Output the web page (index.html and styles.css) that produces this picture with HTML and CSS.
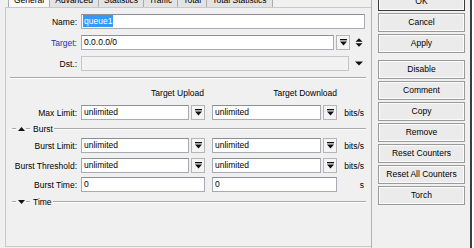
FILE: index.html
```html
<!DOCTYPE html>
<html lang="en">
<head>
    <meta charset="UTF-8">
    <title>Simple Queue</title>
    <link rel="stylesheet" href="styles.css">
</head>
<body>

<div class="window">
    <div class="main">
        <div class="tabs">
            <span class="tab active">General</span>
            <span class="tab">Advanced</span>
            <span class="tab">Statistics</span>
            <span class="tab">Traffic</span>
            <span class="tab">Total</span>
            <span class="tab">Total Statistics</span>
        </div>

        <div class="panel">
            <div class="row">
                <span class="lbl">Name:</span>
                <div class="input w-name"><span class="sel">queue1</span></div>
            </div>
            <div class="row">
                <span class="lbl link">Target:</span>
                <div class="input w-target">0.0.0.0/0</div>
                <span class="drop"><svg width="7" height="7" viewBox="0 0 7 7"><rect x="0" y="0" width="7" height="1.3"/><polygon points="0,2.6 7,2.6 3.5,6.4"/></svg></span>
                <span class="updown"><svg width="8" height="9" viewBox="0 0 8 9"><polygon points="0.5,3.8 4,0.3 7.5,3.8"/><polygon points="0.5,5.2 7.5,5.2 4,8.7"/></svg></span>
            </div>
            <div class="row">
                <span class="lbl">Dst.:</span>
                <div class="input off w-dst"></div>
                <span class="arrow"><svg width="8" height="5" viewBox="0 0 8 5"><polygon points="0,0.5 8,0.5 4,4.5"/></svg></span>
            </div>

            <div class="sep"></div>

            <div class="heads">
                <span class="lbl"></span>
                <span class="head w-col1">Target Upload</span>
                <span class="head w-col2">Target Download</span>
            </div>

            <div class="row mt7">
                <span class="lbl">Max Limit:</span>
                <div class="input w-half1">unlimited</div>
                <span class="drop"><svg width="7" height="7" viewBox="0 0 7 7"><rect x="0" y="0" width="7" height="1.3"/><polygon points="0,2.6 7,2.6 3.5,6.4"/></svg></span>
                <div class="input w-half2 col2">unlimited</div>
                <span class="drop"><svg width="7" height="7" viewBox="0 0 7 7"><rect x="0" y="0" width="7" height="1.3"/><polygon points="0,2.6 7,2.6 3.5,6.4"/></svg></span>
                <span class="unit">bits/s</span>
            </div>

            <div class="section mt4">
                <span class="dash"></span>
                <svg class="tri" width="7" height="4" viewBox="0 0 7 4"><polygon points="0,4 3.5,0 7,4"/></svg>
                <span class="dash"></span>
                <span class="section-name">Burst</span>
                <span class="rule"></span>
            </div>

            <div class="row mt4">
                <span class="lbl">Burst Limit:</span>
                <div class="input w-half1">unlimited</div>
                <span class="drop"><svg width="7" height="7" viewBox="0 0 7 7"><rect x="0" y="0" width="7" height="1.3"/><polygon points="0,2.6 7,2.6 3.5,6.4"/></svg></span>
                <div class="input w-half2 col2">unlimited</div>
                <span class="drop"><svg width="7" height="7" viewBox="0 0 7 7"><rect x="0" y="0" width="7" height="1.3"/><polygon points="0,2.6 7,2.6 3.5,6.4"/></svg></span>
                <span class="unit">bits/s</span>
            </div>
            <div class="row mt5">
                <span class="lbl">Burst Threshold:</span>
                <div class="input w-half1">unlimited</div>
                <span class="drop"><svg width="7" height="7" viewBox="0 0 7 7"><rect x="0" y="0" width="7" height="1.3"/><polygon points="0,2.6 7,2.6 3.5,6.4"/></svg></span>
                <div class="input w-half2 col2">unlimited</div>
                <span class="drop"><svg width="7" height="7" viewBox="0 0 7 7"><rect x="0" y="0" width="7" height="1.3"/><polygon points="0,2.6 7,2.6 3.5,6.4"/></svg></span>
                <span class="unit">bits/s</span>
            </div>
            <div class="row mt4">
                <span class="lbl">Burst Time:</span>
                <div class="input w-col1">0</div>
                <div class="input w-col2 col2">0</div>
                <span class="unit">s</span>
            </div>

            <div class="section mt5">
                <span class="dash"></span>
                <svg class="tri" width="7" height="4" viewBox="0 0 7 4"><polygon points="0,0 7,0 3.5,4"/></svg>
                <span class="dash"></span>
                <span class="section-name">Time</span>
                <span class="rule"></span>
            </div>
        </div>
    </div>

    <div class="side">
        <button class="btn default">OK</button>
        <button class="btn">Cancel</button>
        <button class="btn">Apply</button>
        <button class="btn group">Disable</button>
        <button class="btn">Comment</button>
        <button class="btn">Copy</button>
        <button class="btn">Remove</button>
        <button class="btn">Reset Counters</button>
        <button class="btn">Reset All Counters</button>
        <button class="btn">Torch</button>
    </div>
</div>

</body>
</html>
```

FILE: styles.css
```css
body {
    margin: 0;
    width: 474px;
    height: 248px;
    overflow: hidden;
    background: #ffffff;
    font-family: "Liberation Sans", Arial, sans-serif;
    font-size: 8.5px;
    color: #000;
}

.window {
    display: flex;
    margin-top: -8px;
    height: 256px;
    width: 472px;
    background: #f0f0f0;
}

/* left part: tabs + form */
.main {
    width: 372px;
    box-sizing: border-box;
    padding-left: 5px;
    padding-bottom: 1px;
    border-right: 1px solid #b4b4b4;
    display: flex;
    flex-direction: column;
}

.tabs {
    display: flex;
    height: 15px;
    padding-left: 3px;
}

.tab {
    border: 1px solid #acacac;
    border-bottom: none;
    background: #e3e3e3;
    padding: 0 5px;
    line-height: 14px;
    margin-right: -1px;
}

.tab.active {
    background: #f9f9f9;
}

.panel {
    flex: 1;
    display: flex;
    flex-direction: column;
    border-left: 1px solid #c9c9c9;
    border-top: 1px solid #c9c9c9;
    border-bottom: 1px solid #c9c9c9;
    background: #f0f0f0;
}

.row {
    display: flex;
    align-items: center;
    height: 15px;
    margin-top: 6px;
}

.mt4 { margin-top: 4px; }
.mt5 { margin-top: 5px; }
.mt7 { margin-top: 7px; }

.lbl {
    width: 75px;
    flex: none;
    box-sizing: border-box;
    padding-right: 4px;
    text-align: right;
}

.lbl.link {
    color: #2a2ac4;
}

.input {
    height: 15px;
    box-sizing: border-box;
    border: 1px solid #a9abb2;
    border-top-color: #8d8f96;
    background: #fff;
    padding-left: 2px;
    line-height: 13px;
    white-space: nowrap;
    overflow: hidden;
}

.input.off {
    background: #f2f2f2;
    border-color: #c6c6c6;
}

.sel {
    display: inline-block;
    background: #3399ff;
    color: #fff;
    padding: 0 1px;
    margin-left: -1px;
    line-height: 12px;
}

.w-name { width: 284px; }
.w-target { width: 253px; }
.w-dst { width: 268px; }
.w-half1 { width: 108px; }
.w-half2 { width: 109px; }
.w-col1 { width: 124px; }
.w-col2 { width: 125px; }

.col2 {
    margin-left: 7px;
}

.drop {
    width: 14px;
    height: 15px;
    box-sizing: border-box;
    margin-left: 2px;
    border: 1px solid #b5b5b5;
    background: #f4f4f4;
    display: flex;
    align-items: center;
    justify-content: center;
}

.drop svg,
.updown svg,
.arrow svg,
.tri {
    fill: #111;
}

.updown {
    margin-left: 5px;
    display: flex;
}

.arrow {
    margin-left: 6px;
    display: flex;
}

.unit {
    width: 24px;
    margin-left: 3px;
    text-align: right;
}

.sep {
    height: 0;
    margin: 6px 5px 0 4px;
    border-top: 1px solid #a9a9a9;
    border-bottom: 1px solid #fdfdfd;
}

.heads {
    display: flex;
    height: 10px;
    line-height: 10px;
    margin-top: 9px;
}

.head {
    text-align: right;
}

.head.w-col1 {
    width: 123px;
}

.head.w-col2 {
    margin-left: 8px;
}

.section {
    display: flex;
    align-items: center;
    height: 10px;
    padding-left: 6px;
    margin-right: 5px;
}

.dash,
.rule {
    height: 0;
    border-top: 1px solid #a9a9a9;
    border-bottom: 1px solid #fdfdfd;
}

.dash {
    width: 4px;
}

.tri {
    margin: 0 1px 0 2px;
}

.section-name {
    margin: 0 1px 0 3px;
}

.rule {
    flex: 1;
}

/* right column of buttons */
.side {
    width: 100px;
    box-sizing: border-box;
    padding-left: 6px;
    border-right: 2px solid #3e3e3e;
    display: flex;
    flex-direction: column;
}

.btn {
    width: 87px;
    height: 19px;
    margin: 2px 0 0 0;
    padding: 0;
    box-sizing: border-box;
    border: 1px solid #9a9a9a;
    box-shadow: inset 0 0 0 1px #fbfbfb;
    background: #ebebeb;
    font-family: "Liberation Sans", Arial, sans-serif;
    font-size: 8.5px;
    color: #000;
    text-align: center;
    line-height: 17px;
}

.btn.default {
    margin-top: 0;
    border-color: #3a3a3a;
}

.btn.group {
    margin-top: 7px;
}
```
